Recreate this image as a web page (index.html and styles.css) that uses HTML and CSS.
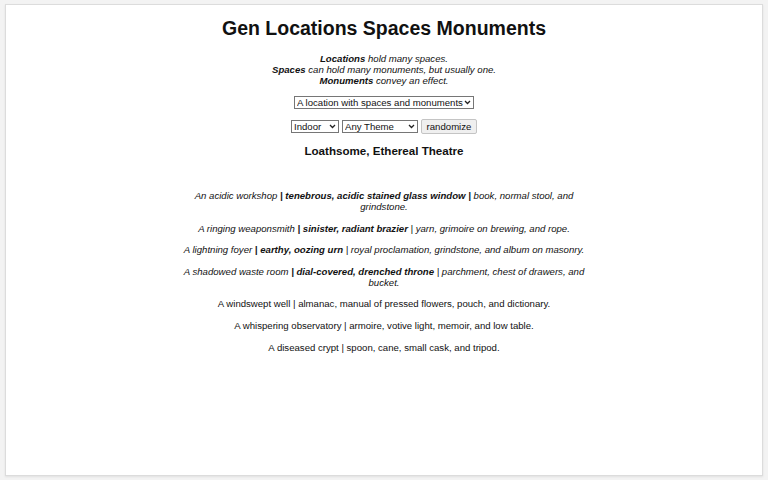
FILE: index.html
```html
<!DOCTYPE html>
<html>
<head>
<meta charset="utf-8">
<link rel="stylesheet" href="styles.css">
</head>
<body>
<div class="card">
  <h1 class="title">Gen Locations Spaces Monuments</h1>
  <div class="intro">
    <div><b>Locations</b> hold many spaces.</div>
    <div><b>Spaces</b> can hold many monuments, but usually one.</div>
    <div><b>Monuments</b> convey an effect.</div>
  </div>
  <div class="row">
    <span class="selwrap"><select class="sel sel-mode"><option>A location with spaces and monuments</option></select><svg class="chev" width="7" height="5" viewBox="0 0 7 5"><path d="M1 1 L3.5 3.5 L6 1" fill="none" stroke="#222" stroke-width="1.3"/></svg></span>
  </div>
  <div class="row">
    <span class="selwrap"><select class="sel sel-place"><option>Indoor</option></select><svg class="chev" width="7" height="5" viewBox="0 0 7 5"><path d="M1 1 L3.5 3.5 L6 1" fill="none" stroke="#222" stroke-width="1.3"/></svg></span>
    <span class="selwrap"><select class="sel sel-theme"><option>Any Theme</option></select><svg class="chev" width="7" height="5" viewBox="0 0 7 5"><path d="M1 1 L3.5 3.5 L6 1" fill="none" stroke="#222" stroke-width="1.3"/></svg></span>
    <button class="btn">randomize</button>
  </div>
  <h2 class="loc">Loathsome, Ethereal Theatre</h2>
  <div class="list">
    <p class="item it">An acidic workshop <b>| tenebrous, acidic stained glass window |</b> book, normal stool, and grindstone.</p>
    <p class="item it">A ringing weaponsmith <b>| sinister, radiant brazier</b> | yarn, grimoire on brewing, and rope.</p>
    <p class="item it">A lightning foyer <b>| earthy, oozing urn</b> | royal proclamation, grindstone, and album on masonry.</p>
    <p class="item it">A shadowed waste room <b>| dial-covered, drenched throne</b> | parchment, chest of drawers, and bucket.</p>
    <p class="item">A windswept well | almanac, manual of pressed flowers, pouch, and dictionary.</p>
    <p class="item">A whispering observatory | armoire, votive light, memoir, and low table.</p>
    <p class="item">A diseased crypt | spoon, cane, small cask, and tripod.</p>
  </div>
</div>
</body>
</html>
```
FILE: styles.css
```css
html, body {
  margin: 0;
  padding: 0;
  background: #f3f3f3;
  height: 100%;
}
body {
  padding: 4px 5px 4px 5px;
  box-sizing: border-box;
  font-family: "Liberation Sans", Arial, sans-serif;
  color: #111;
}
.card {
  background: #fff;
  border: 1px solid #dcdcdc;
  box-shadow: 0 1px 2px rgba(0,0,0,0.08);
  height: 100%;
  box-sizing: border-box;
  text-align: center;
  padding-top: 11px;
}
.title {
  font-size: 19.5px;
  font-weight: bold;
  margin: 0 0 13px 0;
  line-height: 24px;
}
.intro {
  font-style: italic;
  font-size: 9.6px;
  line-height: 11px;
  margin-bottom: 10px;
}
.row {
  display: flex;
  justify-content: center;
  align-items: center;
  gap: 3px;
  margin-bottom: 11px;
  height: 13px;
}
.selwrap {
  position: relative;
  display: inline-block;
  height: 13px;
}
.sel {
  -webkit-appearance: none;
  appearance: none;
  display: block;
  font-family: "Liberation Sans", Arial, sans-serif;
  font-size: 9.6px;
  line-height: 11px;
  height: 13px;
  padding: 0 0 0 2px;
  margin: 0;
  border: 1px solid #767676;
  border-radius: 0;
  background: #fff;
  color: #111;
  box-sizing: border-box;
  text-align: left;
}
.chev {
  position: absolute;
  right: 3px;
  top: 4px;
  pointer-events: none;
}
.sel-mode { width: 180px; }
.sel-place { width: 48px; }
.sel-theme { width: 76px; }
.btn {
  font-family: "Liberation Sans", Arial, sans-serif;
  font-size: 9.6px;
  height: 15px;
  width: 56px;
  padding: 0;
  margin: 0;
  border: 1px solid #c4c4c4;
  border-radius: 2px;
  background: #efefef;
  color: #111;
}
.loc {
  font-size: 11.6px;
  font-weight: bold;
  margin: 0 0 33px 0;
  line-height: 14px;
}
.list {
  width: 405px;
  margin: 0 auto;
}
.item {
  font-size: 9.6px;
  line-height: 10.85px;
  margin: 0 0 10.85px 0;
}
.it { font-style: italic; }
```
